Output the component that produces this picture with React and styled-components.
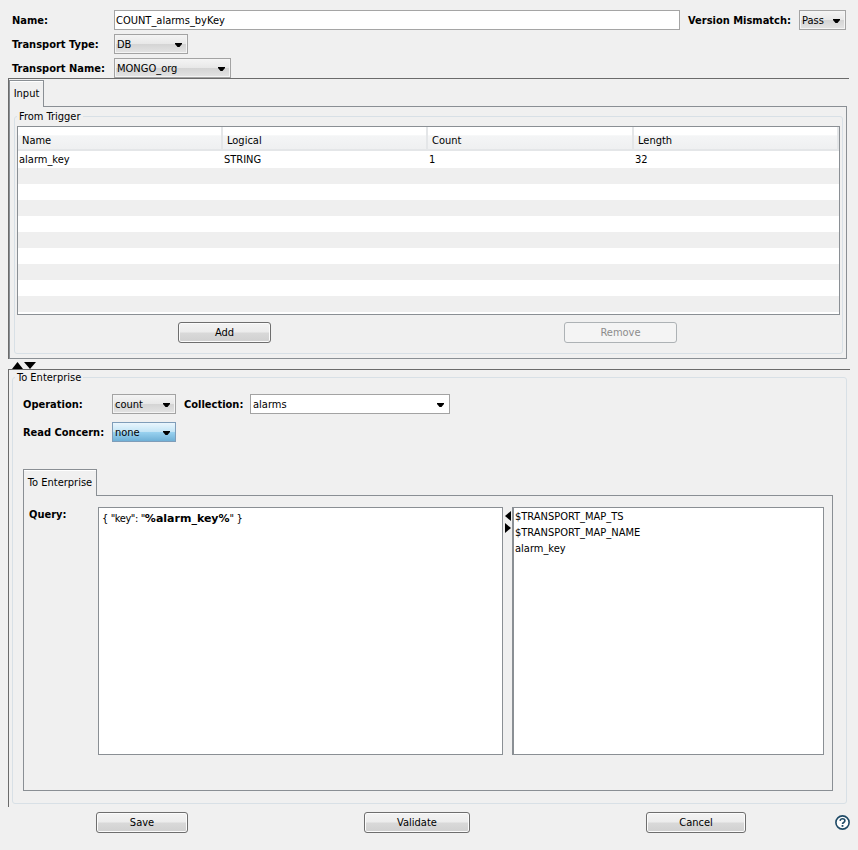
import React from 'react'
import styled, { createGlobalStyle, css } from 'styled-components'

const GlobalStyle = createGlobalStyle`
  html, body {
    margin: 0;
    padding: 0;
    background: #f0f0f0;
  }
  * {
    box-sizing: border-box;
  }
`

const rows = [
  { name: 'alarm_key', logical: 'STRING', count: '1', length: '32' },
  {}, {}, {}, {}, {}, {}, {}, {}, {},
]

const Caret = () => (
  <CaretSvg width="7" height="5" viewBox="0 0 7 5">
    <path d="M0 0h7v1l-2.500 3h-2l-2.500-3z" fill="#000" />
  </CaretSvg>
)

const Select = ({ value, width, open, blue }) => (
  <SelectBox $width={width} $open={open} $blue={blue}>
    <span>{value}</span>
    <Caret />
  </SelectBox>
)

const App = () => (
  <Page>
    <GlobalStyle />
    <TopForm>
      <FormRow>
        <Label>Name:</Label>
        <TextField>COUNT_alarms_byKey</TextField>
        <VersionLabel>Version Mismatch:</VersionLabel>
        <Select value="Pass" width={47} />
      </FormRow>
      <FormRow>
        <Label>Transport Type:</Label>
        <Select value="DB" width={74} />
      </FormRow>
      <FormRow>
        <Label>Transport Name:</Label>
        <Select value="MONGO_org" width={117} />
      </FormRow>
    </TopForm>

    <OuterTabs>
      <TabStrip>
        <Tab $width={35}>Input</Tab>
      </TabStrip>
      <TabPanel>
        <TriggerGroup>
          <Legend>From Trigger</Legend>
          <Table>
            <HeaderRow>
              <HeaderCell>Name</HeaderCell>
              <HeaderCell>Logical</HeaderCell>
              <HeaderCell>Count</HeaderCell>
              <HeaderCell>Length</HeaderCell>
            </HeaderRow>
            {rows.map((row, i) => (
              <DataRow key={i} $odd={i % 2 === 1}>
                <DataCell>{row.name}</DataCell>
                <DataCell>{row.logical}</DataCell>
                <DataCell>{row.count}</DataCell>
                <DataCell>{row.length}</DataCell>
              </DataRow>
            ))}
          </Table>
          <TableActions>
            <Button $width={93}>Add</Button>
            <Button $width={113} disabled>Remove</Button>
          </TableActions>
        </TriggerGroup>
      </TabPanel>
    </OuterTabs>

    <Splitter>
      <svg width="24" height="7" viewBox="0 0 24 7">
        <path d="M0 7L5.500 0L11 7z" fill="#000" />
        <path d="M12 0H24L18 7z" fill="#000" />
      </svg>
    </Splitter>

    <LowerPane>
      <EnterpriseGroup>
        <Legend>To Enterprise</Legend>
        <OperationRow>
          <SmallLabel>Operation:</SmallLabel>
          <Select value="count" width={64} />
          <CollectionLabel>Collection:</CollectionLabel>
          <Select value="alarms" width={200} open />
        </OperationRow>
        <OperationRow>
          <SmallLabel>Read Concern:</SmallLabel>
          <Select value="none" width={64} blue />
        </OperationRow>
        <InnerTabs>
          <TabStrip>
            <Tab $width={74}>To Enterprise</Tab>
          </TabStrip>
          <QueryPanel>
            <QueryLabel>Query:</QueryLabel>
            <QueryBox>
              {'{ "key": "'}<QueryVar>%alarm_key%</QueryVar>{'" }'}
            </QueryBox>
            <MoveArrows>
              <svg width="6" height="22" viewBox="0 0 6 22">
                <path d="M6 0V10L0 5z" fill="#000" />
                <path d="M0 12V22L6 17z" fill="#000" />
              </svg>
            </MoveArrows>
            <VariableList>
              <div>$TRANSPORT_MAP_TS</div>
              <div>$TRANSPORT_MAP_NAME</div>
              <div>alarm_key</div>
            </VariableList>
          </QueryPanel>
        </InnerTabs>
      </EnterpriseGroup>
    </LowerPane>

    <Footer>
      <FooterButtons>
        <Button $width={92}>Save</Button>
        <Button $width={106}>Validate</Button>
        <Button $width={100}>Cancel</Button>
      </FooterButtons>
      <HelpIcon width="15" height="15" viewBox="0 0 15 15">
        <circle cx="7.500" cy="7.500" r="6.600" fill="#fff" stroke="#1f4a66" strokeWidth="1.600" />
        <path d="M5.100 5.800C5.300 4.400 6.300 3.800 7.500 3.800c1.400 0 2.400.8 2.400 2 0 1.700-2.400 1.700-2.400 3.300" fill="none" stroke="#1f4a66" strokeWidth="1.600" />
        <rect x="6.600" y="10" width="1.800" height="1.800" fill="#1f4a66" />
      </HelpIcon>
    </Footer>
  </Page>
)

export default App

const FONT = `"DejaVu Sans Condensed", "DejaVu Sans", sans-serif`

const Page = styled.div`
  width: 858px;
  height: 850px;
  overflow: hidden;
  background: #f0f0f0;
  color: #000;
  font-family: ${FONT};
  font-stretch: condensed;
  font-size: 11px;
`

const TopForm = styled.div`
  display: flex;
  flex-direction: column;
  gap: 4px;
  padding: 10px 12px 0 12px;
  height: 78px;
`

const FormRow = styled.div`
  display: flex;
  align-items: center;
  height: 20px;
`

const Label = styled.div`
  font-weight: bold;
  font-size: 11px;
  white-space: nowrap;
  width: 102px;
`

const VersionLabel = styled(Label)`
  width: 111px;
  margin-left: 8px;
`

const CollectionLabel = styled(Label)`
  width: 66px;
  margin-left: 8px;
`

const SmallLabel = styled(Label)`
  width: 89px;
`

const TextField = styled.div`
  width: 566px;
  height: 20px;
  line-height: 19px;
  padding-left: 1px;
  background: #fff;
  border: 1px solid #a5a5a5;
`

const SelectBox = styled.div`
  width: ${(p) => p.$width}px;
  height: 20px;
  flex: none;
  display: flex;
  align-items: center;
  padding: 0 5px 0 2px;
  border: 1px solid #a3a3a3;
  box-shadow: inset 0 0 0 1px #f4f4f4;
  background: linear-gradient(#f4f4f4 0%, #e8e8e8 48%, #d4d4d4 52%, #e4e4e4 100%);
  ${(p) => p.$open && css`
    background: #fff;
    box-shadow: none;
  `}
  ${(p) => p.$blue && css`
    border-color: #7f9db9;
    box-shadow: none;
    background: linear-gradient(#eaf6fd 0%, #c4e5f6 48%, #98d1ef 52%, #6fb0d6 100%);
  `}
`

const CaretSvg = styled.svg`
  flex: none;
  margin-top: 3px;
  margin-left: auto;
`

const OuterTabs = styled.div`
  margin-left: 8px;
  width: 841px;
  height: 281px;
  padding-top: 1px;
  border-top: 1px solid #6b6b6b;
  border-left: 1px solid #6b6b6b;
  display: flex;
  flex-direction: column;
`

const TabStrip = styled.div`
  display: flex;
  height: 26px;
  flex: none;
`

const Tab = styled.div`
  width: ${(p) => p.$width}px;
  height: 27px;
  line-height: 25px;
  text-align: center;
  white-space: nowrap;
  background: #f0f0f0;
  border: 1px solid #8a8f94;
  border-bottom: none;
  box-shadow: inset 0 1px 0 #fff;
  position: relative;
  z-index: 1;
`

const TabPanel = styled.div`
  width: 838px;
  height: 253px;
  flex: none;
  border: 1px solid #8a8f94;
  padding: 3px 3px 4px 4px;
`

const Legend = styled.div`
  position: absolute;
  top: -7px;
  left: 2px;
  padding: 0 2px;
  line-height: 13px;
  background: #f0f0f0;
`

const TriggerGroup = styled.div`
  position: relative;
  height: 238px;
  margin-top: 6px;
  border: 1px solid #d8e0e6;
  border-radius: 3px;
  padding: 9px 2px 0 2px;
`

const Table = styled.div`
  height: 189px;
  background: #fff;
  border: 1px solid #8a8f94;
  padding-bottom: 2px;
`

const gridColumns = css`
  display: grid;
  grid-template-columns: 205px 205px 206px 205px;
`

const HeaderRow = styled.div`
  ${gridColumns}
  height: 24px;
  margin-bottom: 1px;
  background: linear-gradient(#fff 0%, #fff 35%, #f4f5f6 40%, #eff0f1 100%);
  border-bottom: 2px solid #e4e6e8;
`

const HeaderCell = styled.div`
  padding: 7px 0 0 4px;
  line-height: 14px;
  border-right: 2px solid #e4e6e8;
`

const DataRow = styled.div`
  ${gridColumns}
  height: 16px;
  background: ${(p) => (p.$odd ? '#efefef' : '#fff')};
`

const DataCell = styled.div`
  padding-left: 1px;
  line-height: 15px;
`

const TableActions = styled.div`
  display: flex;
  justify-content: space-between;
  padding: 7px 163px 0 161px;
`

const Button = styled.button`
  width: ${(p) => p.$width}px;
  height: 21px;
  padding: 0;
  font: inherit;
  font-stretch: condensed;
  color: #000;
  border: 1px solid #6e6e6e;
  border-radius: 3px;
  background: linear-gradient(#f3f3f3 0%, #ececec 48%, #d9d9d9 52%, #d0d0d0 100%);
  box-shadow: inset 0 0 0 1px #fbfbfb;
  &:disabled {
    color: #8c8c8c;
    border-color: #adb2b5;
    background: #f4f4f4;
    box-shadow: none;
  }
`

const Splitter = styled.div`
  height: 10px;
  padding: 3px 0 0 12px;
  line-height: 0;
`

const LowerPane = styled.div`
  margin-left: 8px;
  width: 842px;
  height: 438px;
  border-top: 1px solid #6b6b6b;
  border-left: 1px solid #6b6b6b;
  padding: 7px 3px 0 3px;
`

const EnterpriseGroup = styled.div`
  position: relative;
  height: 427px;
  border: 1px solid #d8e0e6;
  border-radius: 3px;
  padding: 16px 0 0 10px;
`

const OperationRow = styled.div`
  display: flex;
  align-items: center;
  height: 20px;
  margin-bottom: 8px;
`

const InnerTabs = styled.div`
  margin-top: 27px;
  width: 810px;
`

const QueryPanel = styled.div`
  height: 296px;
  border: 1px solid #8a8f94;
  padding: 11px 8px 35px 5px;
  display: flex;
`

const QueryLabel = styled(Label)`
  width: 69px;
  padding-top: 1px;
`

const QueryBox = styled.div`
  width: 405px;
  height: 248px;
  padding: 3px;
  background: #fff;
  border: 1px solid #8a8f94;
  line-height: 16px;
  letter-spacing: -0.400px;
`

const QueryVar = styled.b`
  font-family: "DejaVu Sans", sans-serif;
  font-stretch: normal;
  letter-spacing: 0;
`

const MoveArrows = styled.div`
  width: 9px;
  padding: 4px 0 0 2px;
  line-height: 0;
`

const VariableList = styled.div`
  width: 312px;
  height: 248px;
  padding: 1px 1px 0;
  background: #fff;
  border: 1px solid #8a8f94;
  border-left-width: 2px;
  line-height: 16px;
`

const Footer = styled.div`
  display: flex;
  align-items: flex-start;
  height: 21px;
  margin-top: 5px;
  padding-left: 96px;
`

const FooterButtons = styled.div`
  display: flex;
  gap: 176px;
`

const HelpIcon = styled.svg`
  flex: none;
  margin: 3px 0 0 89px;
`
